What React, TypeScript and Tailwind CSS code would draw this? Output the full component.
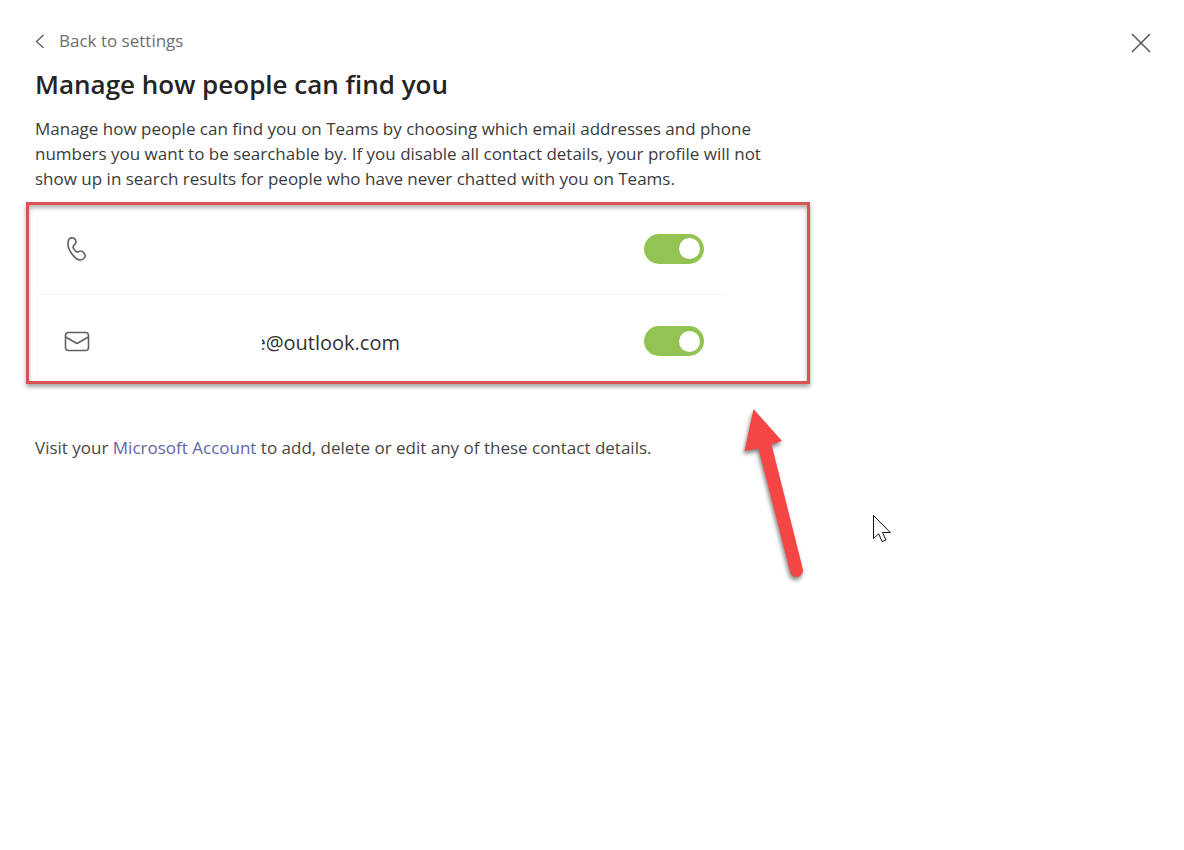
import React, { useState } from 'react';

interface ContactDetail {
  id: string;
  label: string;
  value?: string;
  icon: React.ReactNode;
}

function PhoneIcon() {
  return (
    <svg viewBox="0 0 26 26" className="h-[26px] w-[26px]" fill="none" stroke="#606060" strokeWidth="1.6" strokeLinejoin="round">
      <path d="M5 3.2C6 1.8 8.700 1.300 10.300 2.500c1.500 1.100 1.900 3.200 1.300 4.800-.6 1.500-2.400 2-2.500 3.500-.1 1.500 2.200 4.500 3.700 5.100 1.300.5 2.500-.9 3.900-.9 1.900 0 4.300 2.700 4.500 4.500.2 2-2.300 4.500-5 4.500C11.500 24 4 14.500 4 8c0-1.800.3-3.700 1-4.800z" />
    </svg>
  );
}

function MailIcon() {
  return (
    <svg viewBox="0 0 26 26" className="h-[26px] w-[26px]" fill="none" stroke="#606060" strokeWidth="1.6" strokeLinejoin="round">
      <rect x="1.5" y="4.5" width="23" height="18" rx="3" />
      <path d="M1.5 9L13 15.500 24.500 9" />
    </svg>
  );
}

const contacts: ContactDetail[] = [
  { id: 'phone', label: 'Phone number', icon: <PhoneIcon /> },
  { id: 'email', label: 'Email address', value: 'e@outlook.com', icon: <MailIcon /> },
];

function ContactRow({ contact }: { contact: ContactDetail }) {
  const [enabled, setEnabled] = useState(true);

  return (
    <li className="flex h-[92px] items-center pr-[21px] pl-[29px]">
      {contact.icon}
      <label htmlFor={contact.id} aria-label={contact.label} className="flex flex-1 pt-[3px] pl-[172px]">
        {/* The start of the address is hidden */}
        {contact.value && (
          <span className="flex w-[138px] justify-end overflow-hidden text-[20px] leading-7 text-[#333]">
            {contact.value}
          </span>
        )}
      </label>
      <input
        id={contact.id}
        type="checkbox"
        role="switch"
        checked={enabled}
        onChange={(e) => setEnabled(e.target.checked)}
        className="flex h-[30px] w-[60px] cursor-pointer appearance-none items-center rounded-full bg-gray-400 px-1 before:h-[21px] before:w-[21px] before:rounded-full before:bg-white checked:justify-end checked:bg-[#92c353]"
      />
    </li>
  );
}

// Red arrow pointing at the highlighted list
function Arrow() {
  return (
    <svg viewBox="0 0 80 190" className="pointer-events-none absolute top-[400px] left-[735px] h-[190px] w-[80px] drop-shadow-[-1px_3px_2px_rgba(0,0,0,0.5)]" fill="#f54545">
      <path d="M18.500 9L47 41l-10.500 3.500L67.800 169a6.500 6.500 0 0 1-12.500 3.500L23.500 48.500 9.500 51z" />
    </svg>
  );
}

function Cursor() {
  return (
    <svg viewBox="0 0 20 30" className="pointer-events-none absolute top-[514px] left-[872px] h-[30px] w-5" fill="#fff" stroke="#111" strokeWidth="1">
      <path d="M1.500 1.500v23l5.200-4.700 3.300 7.700 4-1.500-3.500-7.500h7.800z" />
    </svg>
  );
}

export default function App() {
  return (
    <div className="relative min-h-screen bg-white px-[35px] pt-7 font-['Open_Sans','Noto_Sans',sans-serif] text-[17px] leading-[25px] text-[#3b3b3b]">
      <header className="flex items-start justify-between">
        <button className="flex items-center gap-[14px] text-[#6e6e6e]">
          <svg viewBox="0 0 10 14" className="h-[14px] w-[10px]" fill="none" stroke="#555" strokeWidth="1.2">
            <path d="M8.500 1L1.500 7.500l7 6.500" />
          </svg>
          Back to settings
        </button>
        <button aria-label="Close" className="mt-[5px]">
          <svg viewBox="0 0 18 20" className="h-5 w-[18px] overflow-visible" fill="none" stroke="#555" strokeWidth="1.5">
            <path d="M1 1l18 18M19 1L1 19" />
          </svg>
        </button>
      </header>

      <main>
        <h1 className="mt-[13px] text-[26px] leading-9 font-semibold text-[#252424]">
          Manage how people can find you
        </h1>
        <p className="mt-[14px] max-w-[750px]">
          Manage how people can find you on Teams by choosing which email addresses and phone
          numbers you want to be searchable by. If you disable all contact details, your profile will not
          show up in search results for people who have never chatted with you on Teams.
        </p>

        <section className="-ml-[9px] mt-[11px] max-w-[784px] border-[3px] border-[#d95353] px-[6px] shadow-[0_3px_4px_rgba(0,0,0,0.35),inset_0_3px_4px_rgba(0,0,0,0.3)]">
          <ul className="-mt-[2px] -mb-[6px] max-w-[690px] divide-y divide-[#f4f4f4]">
            {contacts.map((contact) => (
              <ContactRow key={contact.id} contact={contact} />
            ))}
          </ul>
        </section>

        <p className="mt-[51px] text-[#484644]">
          Visit your <a href="#account" className="text-[#6264a7]">Microsoft Account</a> to add, delete or edit any of these contact details.
        </p>
      </main>

      <Arrow />
      <Cursor />
    </div>
  );
}
